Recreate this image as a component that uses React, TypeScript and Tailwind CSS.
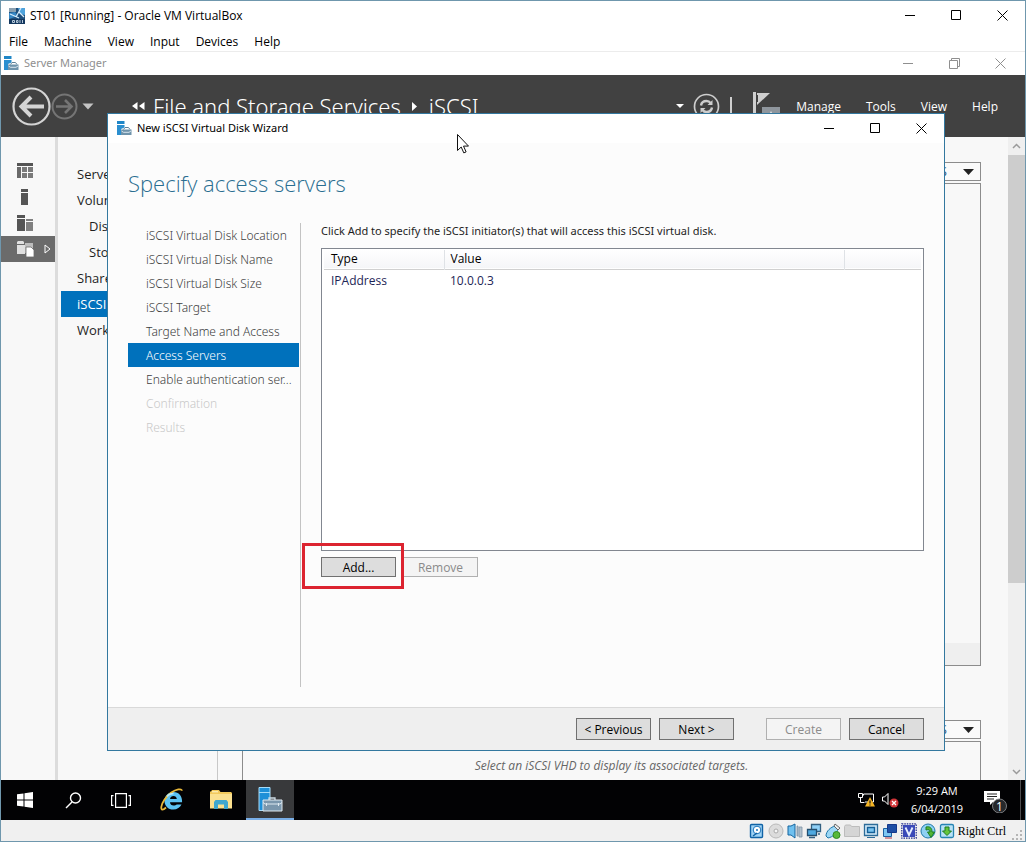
import { useState, type ReactNode } from "react";
import clsx from "clsx";

const STEPS = [
  { label: "iSCSI Virtual Disk Location" },
  { label: "iSCSI Virtual Disk Name" },
  { label: "iSCSI Virtual Disk Size" },
  { label: "iSCSI Target" },
  { label: "Target Name and Access" },
  { label: "Access Servers" },
  { label: "Enable authentication ser..." },
  { label: "Confirmation", disabled: true },
  { label: "Results", disabled: true },
];

const NAV = [
  { label: "Servers" },
  { label: "Volumes" },
  { label: "Disks", sub: true },
  { label: "Storage Pools", sub: true },
  { label: "Shares" },
  { label: "iSCSI" },
  { label: "Work Folders" },
];

const INITIATORS = [{ type: "IPAddress", value: "10.0.0.3" }];

/* ---------- window chrome ---------- */

function WindowControls({ restore, className }: { restore?: boolean; className?: string }) {
  const btn = "flex h-full w-[46px] items-center justify-center";
  return (
    <div className={clsx("flex h-full shrink-0", className)}>
      <button className={btn} aria-label="Minimize">
        <svg width="11" height="11" viewBox="0 0 11 11" stroke="currentColor" fill="none"><path d="M0 5.5h10" /></svg>
      </button>
      <button className={btn} aria-label={restore ? "Restore" : "Maximize"}>
        <svg width="11" height="11" viewBox="0 0 11 11" stroke="currentColor" fill="none">
          {restore ? <path d="M.5 2.5h8v8h-8zM2.5 2.500v-2h8v8h-2" /> : <path d="M.5.5h9v9h-9z" />}
        </svg>
      </button>
      <button className={btn} aria-label="Close">
        <svg width="11" height="11" viewBox="0 0 11 11" stroke="currentColor" fill="none"><path d="M.5.5l10 10M10.500.5l-10 10" /></svg>
      </button>
    </div>
  );
}

function ServerIcon({ size = 15 }: { size?: number }) {
  return (
    <svg width={size} height={size} viewBox="0 0 15 15" className="shrink-0">
      <path d="M0 0h7.500v3H0z" fill="#1f86c7" />
      <path d="M0 4h7.500v2.500L4 8v6H0z" fill="#2b8fd0" />
      <path d="M6.500 8.500l1.500-2h3.500l1.500 2" fill="none" stroke="#5f8096" />
      <path d="M4 8.500h10.500V14H4z" fill="#6f93ab" />
      <path d="M4.500 10l2 1.300h5.500l2-1.300" fill="none" stroke="#e4eef5" strokeWidth=".9" />
    </svg>
  );
}

function VmIcon() {
  return (
    <svg width="16" height="16" viewBox="0 0 16 16" className="shrink-0">
      <rect width="16" height="16" fill="#1d4e7c" />
      <path d="M0 0h7v4H0z" fill="#8ba0b0" />
      <path d="M9 0h7v7l-5-1z" fill="#4ea3dd" />
      <path d="M0 5l6-1 3 4-9 3z" fill="#3787c4" />
      <path d="M12 0L7 9M1 6l9 4M10 4l5 5" stroke="#d8ecfa" strokeWidth="1.200" />
      <path d="M0 11h16v5H0z" fill="#14385f" />
      <path d="M3.500 12.500h2v2h-2zM7.500 12.500h1.500v2H7.500zM11 12v3M13.500 12v3" fill="none" stroke="#c7d8e6" strokeWidth=".9" />
    </svg>
  );
}

/* ---------- server manager header ---------- */

function Header() {
  return (
    <header className="flex h-[62px] shrink-0 items-center bg-[#414141] text-white">
      <div className="flex h-full w-[131px] shrink-0 items-center pl-[11px]">
        <button aria-label="Back">
          <svg width="39" height="39" viewBox="0 0 39 39" fill="none">
            <circle cx="19.500" cy="19.500" r="18" stroke="#d4d4d4" strokeWidth="2.200" />
            <path d="M32 19.500H11M19 10l-9.500 9.500L19 29" stroke="#d4d4d4" strokeWidth="4" />
          </svg>
        </button>
        <button aria-label="Forward">
          <svg width="27" height="27" viewBox="0 0 27 27" fill="none">
            <circle cx="13.500" cy="13.500" r="12" stroke="#757575" strokeWidth="2" />
            <path d="M5 13.500h15M14 7l6.500 6.500L14 20" stroke="#757575" strokeWidth="2.600" />
          </svg>
        </button>
        <button aria-label="History" className="ml-1">
          <svg width="12" height="7" viewBox="0 0 12 7"><path d="M.5.5h11L6 6.500z" fill="#c4c4c4" /></svg>
        </button>
      </div>
      <nav className="flex min-w-0 flex-1 items-center font-['Noto_Sans',sans-serif] text-[22px] leading-8 font-light whitespace-nowrap">
        <svg width="13" height="8" viewBox="0 0 13 8" fill="#fff" className="mr-2 shrink-0"><path d="M5.500 0v8L0 4zM12.500 0v8L7 4z" /></svg>
        <a href="#storage">File and Storage Services</a>
        <svg width="6" height="9" viewBox="0 0 6 9" fill="#fff" className="mx-[11px] shrink-0"><path d="M0 0v9l5-4.500z" /></svg>
        <a href="#iscsi">iSCSI</a>
      </nav>
      <div className="flex shrink-0 items-center pr-[27px] text-[12px]">
        <svg width="8" height="5" viewBox="0 0 8 5" fill="#fff" className="mr-[9px]"><path d="M0 0h8L4 4z" /></svg>
        <button aria-label="Refresh">
          <svg width="27" height="27" viewBox="0 0 27 27" fill="none" stroke="#cdcdcd">
            <circle cx="13.500" cy="13.500" r="12" strokeWidth="1.700" />
            <path d="M8 12.500c.5-3 3-4.500 5.500-4.500 1.500 0 3 .5 4 2M19 14.500c-.5 3-3 4.500-5.500 4.500-1.500 0-3-.5-4-2" strokeWidth="2.400" />
            <path d="M19.500 7v5h-5zM7.500 20v-5h5z" fill="#cdcdcd" stroke="none" />
          </svg>
        </button>
        <span className="ml-[10px] h-[18px] w-[2px] bg-[#cfcfcf]" />
        <button aria-label="Notifications" className="ml-[21px]">
          <svg width="28" height="28" viewBox="0 0 28 28">
            <path d="M0 0h3v28H0z" fill="#cfcfcf" />
            <path d="M4 1h13L4 13z" fill="#cfcfcf" />
            <path d="M4.500 3v7" stroke="#414141" />
            <path d="M9 15h18v11H9z" fill="#8f969d" />
            <path d="M18 19l3 6h-6z" fill="#e9e9e9" />
          </svg>
        </button>
        <div className="ml-[15px] flex gap-[25px] pt-[2px]">
          <button>Manage</button>
          <button>Tools</button>
          <button>View</button>
          <button>Help</button>
        </div>
      </div>
    </header>
  );
}

/* ---------- left rail + role navigation ---------- */

function Rail() {
  const row = "flex h-[26px] w-full items-center pl-4";
  return (
    <div className="w-[54px] shrink-0 bg-[#f8f8f8] pt-[21px]">
      <button className={row} aria-label="Dashboard">
        <svg width="16" height="16" viewBox="0 0 16 16">
          <path d="M0 0h16v3H0z" fill="#555" />
          <path d="M0 4h4v11H0z" fill="#6a6a6a" />
          <path d="M5 4h5v5H5zM11 4h5v5h-5zM5 10h5v5H5zM11 10h5v5h-5z" fill="#7a7a7a" />
        </svg>
      </button>
      <button className={row} aria-label="Local Server">
        <svg width="16" height="16" viewBox="0 0 16 16"><path d="M4 0h7v3H4zM4 4h7v12H4z" fill="#555" /></svg>
      </button>
      <button className={row} aria-label="All Servers">
        <svg width="16" height="16" viewBox="0 0 16 16">
          <path d="M0 0h8v3H0zM0 4h8v12H0z" fill="#555" />
          <path d="M9 4h7v2H9zM9 7h7v9H9z" fill="#808080" />
        </svg>
      </button>
      <button className={clsx(row, "bg-[#6b6b6b]")} aria-label="File and Storage Services">
        <svg width="17" height="16" viewBox="0 0 17 16">
          <path d="M0 1l1-1h5l1 1v2H0zM0 4h8v9H0z" fill="#e0e0e0" />
          <path d="M8 2h8v3H8zM8 5h8v7H8z" fill="#bdbdbd" />
          <path d="M9 6h5l3 3v7H9z" fill="#fff" stroke="#6b6b6b" strokeWidth=".8" />
        </svg>
        <svg width="7" height="10" viewBox="0 0 7 10" className="ml-[10px]"><path d="M1 1v8l5-4z" fill="none" stroke="#fff" /></svg>
      </button>
    </div>
  );
}

function RoleNav() {
  return (
    <nav className="w-[160px] shrink-0 border-r border-[#c8c8c8] bg-[#f8f8f8] pt-6 pl-[3px] text-[13px]">
      {NAV.map((item) => (
        <a
          key={item.label}
          href={`#${item.label}`}
          className={clsx(
            "flex h-[26px] items-center pt-[2px] whitespace-nowrap",
            item.sub ? "pl-7" : "pl-4",
            item.label === "iSCSI" ? "bg-[#0071bc] text-white" : "text-[#1e1e1e]"
          )}
        >
          {item.label}
        </a>
      ))}
    </nav>
  );
}

function TasksSelect({ label }: { label: string }) {
  return (
    <div className="relative h-[19px] w-20 self-end">
      <select
        aria-label={label}
        className="h-full w-full appearance-none border border-[#8c8c8c] bg-[#fafafa] pl-[10px] text-[12px] leading-4 text-[#1f4e79]"
      >
        <option>TASKS</option>
      </select>
      <svg width="11" height="6" viewBox="0 0 11 6" className="pointer-events-none absolute top-[7px] right-[7px]">
        <path d="M0 0h11L5.500 6z" fill="#222" />
      </svg>
    </div>
  );
}

function Scrollbar() {
  return (
    <div className="flex w-[17px] shrink-0 flex-col bg-[#efefef] text-[#9a9a9a]">
      <button aria-label="Scroll up" className="flex h-[18px] items-center justify-center">
        <svg width="9" height="6" viewBox="0 0 9 6" fill="none" stroke="currentColor" strokeWidth="1.500"><path d="M1 5l3.500-3.500L8 5" /></svg>
      </button>
      <div className="flex-[428_1_0%] bg-[#cdcdcd]" />
      <div className="flex-[180_1_0%]" />
      <button aria-label="Scroll down" className="flex h-[17px] items-center justify-center">
        <svg width="9" height="6" viewBox="0 0 9 6" fill="none" stroke="currentColor" strokeWidth="1.500"><path d="M1 1l3.500 3.500L8 1" /></svg>
      </button>
    </div>
  );
}

/* ---------- wizard ---------- */

function DialogButton({ children, disabled, className, onClick }: { children: ReactNode; disabled?: boolean; className?: string; onClick?: () => void }) {
  return (
    <button
      disabled={disabled}
      onClick={onClick}
      className={clsx(
        "w-[75px] border pt-[2px] text-[12px] leading-4",
        disabled ? "border-[#b0b0b0] bg-[#f4f4f4] text-[#8b8b8b]" : "border-[#707070] bg-[#dddddd] text-black",
        className
      )}
    >
      {children}
    </button>
  );
}

function Wizard() {
  const [step, setStep] = useState(5);

  return (
    <section
      role="dialog"
      aria-label="New iSCSI Virtual Disk Wizard"
      className="absolute top-[61px] right-20 bottom-[69px] left-[106px] flex flex-col border border-[#33789f] bg-[#fcfcfc]"
    >
      <div className="flex h-[29px] shrink-0 items-center bg-white pl-[9px]">
        <ServerIcon />
        <span className="ml-[5px] flex-1 font-['Noto_Sans',sans-serif] text-[11px] text-black">New iSCSI Virtual Disk Wizard</span>
        <WindowControls />
      </div>

      <h1 className="mt-6 mb-6 pl-5 text-[22px] leading-8 font-light text-[#2a6e91]">Specify access servers</h1>

      <div className="flex min-h-0 flex-1 pr-5 pb-5 pl-5">
        <ol className="w-[173px] shrink-0 border-r border-[#c3c3c3] pr-px">
          {STEPS.map((s, i) => (
            <li key={s.label}>
              <button
                disabled={s.disabled}
                onClick={() => setStep(i)}
                aria-current={i === step ? "step" : undefined}
                className={clsx(
                  "block h-6 w-full pt-[2px] pl-[18px] text-left font-['Noto_Sans',sans-serif] text-[12px] font-light whitespace-nowrap",
                  i === step ? "bg-[#0071bc] text-white" : s.disabled ? "text-[#c8c8c8]" : "text-[#3c3c3c]"
                )}
              >
                {s.label}
              </button>
            </li>
          ))}
        </ol>

        <div className="flex min-w-0 flex-1 flex-col pl-5">
          <p className="font-['Noto_Sans',sans-serif] text-[11px] leading-4 whitespace-nowrap text-[#1e1e1e]">
            Click Add to specify the iSCSI initiator(s) that will access this iSCSI virtual disk.
          </p>
          <div className="mt-[9px] h-[303px] border border-[#828790] bg-white px-[2px] pt-px">
            <table className="w-full table-fixed border-collapse text-left text-[12px] leading-4">
              <colgroup>
                <col className="w-[120px]" />
                <col className="w-[400px]" />
                <col />
              </colgroup>
              <thead>
                <tr className="h-[19px] border-b border-[#d0d0d0] bg-linear-to-b from-white to-[#f5f6f8]">
                  <th className="border-r border-[#dfe2e6] pl-[7px] font-normal">Type</th>
                  <th className="border-r border-[#dfe2e6] pl-[6px] font-normal">Value</th>
                  <th />
                </tr>
              </thead>
              <tbody>
                {INITIATORS.map((row) => (
                  <tr key={row.value} className="h-6 text-[#1d2556]">
                    <td className="pl-[7px]">{row.type}</td>
                    <td className="pl-[6px]">{row.value}</td>
                    <td />
                  </tr>
                ))}
              </tbody>
            </table>
          </div>
          <div className="mt-[6px] flex gap-[7px]">
            <div className="relative flex">
              <DialogButton className="h-5">Add...</DialogButton>
              {/* highlight frame */}
              <div className="pointer-events-none absolute -top-[14px] -right-2 -bottom-3 -left-[19px] border-3 border-[#dc2430]" />
            </div>
            <DialogButton className="h-5" disabled>Remove</DialogButton>
          </div>
        </div>
      </div>

      <div className="flex h-[43px] shrink-0 items-center justify-end border-t border-[#d9d9d9] bg-[#efefef] pr-5">
        <DialogButton className="h-[22px]" onClick={() => setStep((s) => Math.max(0, s - 1))}>&lt; Previous</DialogButton>
        <DialogButton className="ml-2 h-[22px]" onClick={() => setStep((s) => Math.min(6, s + 1))}>Next &gt;</DialogButton>
        <DialogButton className="ml-8 h-[22px]" disabled>Create</DialogButton>
        <DialogButton className="ml-2 h-[22px]">Cancel</DialogButton>
      </div>
    </section>
  );
}

/* ---------- guest taskbar ---------- */

function Taskbar() {
  const cell = "flex h-full w-12 items-center justify-center";
  return (
    <div className="flex h-10 shrink-0 items-center bg-[#020204] text-white">
      <button className={cell} aria-label="Start">
        <svg width="16" height="16" viewBox="0 0 16 16" fill="#fff"><path d="M0 2.300L6.500 1.400V7.500H0zM7.500 1.200L16 0v7.500H7.500zM0 8.500h6.500v6.100L0 13.700zM7.500 8.500H16V16l-8.500-1.200z" /></svg>
      </button>
      <button className={cell} aria-label="Search">
        <svg width="17" height="17" viewBox="0 0 17 17" fill="none" stroke="#fff" strokeWidth="1.400"><circle cx="10.500" cy="6" r="5" /><path d="M7 10L1 16" /></svg>
      </button>
      <button className={cell} aria-label="Task View">
        <svg width="20" height="15" viewBox="0 0 20 15" fill="none" stroke="#fff" strokeWidth="1.200"><path d="M4.600.6h10.800v13.800H4.600zM2.500 2.600H.6v9.800h1.900M17.500 2.600h1.900v9.800h-1.900" /></svg>
      </button>
      <button className={clsx(cell, "ml-[3px]")} aria-label="Internet Explorer">
        <svg width="24" height="24" viewBox="0 0 24 24" fill="none">
          <path d="M21.500 16.500c-1.400 2.900-4.300 5-8.200 5-5.200 0-8.800-3.800-8.800-8.600 0-4.900 3.700-9 8.900-9 5.400 0 9 4 8.700 10.300H10c.2 2.100 1.600 3.300 3.500 3.300 1.400 0 2.500-.3 3.100-1z" fill="#5cc3f2" />
          <path d="M10 10.900h6.800c-.2-1.900-1.500-3-3.300-3s-3.200 1.100-3.500 3z" fill="#020204" />
          <path d="M6 19.500C3 22.500 1 22.500 1.300 19c.4-4 4.500-10.500 10-14.400C16 1.200 21.800.2 21.900 2.800" stroke="#e9b93a" strokeWidth="1.800" />
          <path d="M7 8.500c1.500-2 4-3 6.500-3" stroke="#b8e8fb" strokeWidth="1.400" />
        </svg>
      </button>
      <button className={clsx(cell, "ml-px")} aria-label="File Explorer">
        <svg width="22" height="20" viewBox="0 0 22 20">
          <path d="M0 1.500h1L2 0h7l1.500 2H21l1 1v15H0z" fill="#f2c95c" />
          <path d="M0 4h22v14.500H0z" fill="#fbe08f" />
          <path d="M4 19v-7l1.500-2h11l1.500 2v7h-4v-4.500H8V19z" fill="#3fa7cf" />
          <path d="M2 1.800h6" stroke="#fff5cc" />
        </svg>
      </button>
      <button className={clsx(cell, "ml-px border-b-2 border-[#79aee6] bg-[#38393b]")} aria-label="Server Manager">
        <svg width="25" height="25" viewBox="0 0 25 25">
          <path d="M1 .5h11v23H1z" fill="#1e90d8" stroke="#a5dcfa" />
          <path d="M1 5.500h11" stroke="#a5dcfa" />
          <path d="M11 13v-2h6v2" fill="none" stroke="#cddbe5" strokeWidth="1.300" />
          <path d="M5 13h19v11H5z" fill="#7b97ad" stroke="#dfe9f0" />
          <path d="M5 15.500l2 1.500h15l2-1.500M8.500 16v3M20.500 16v3" fill="none" stroke="#dfe9f0" />
        </svg>
      </button>

      <div className="ml-auto flex h-full items-center">
        <svg width="17" height="16" viewBox="0 0 17 16" fill="none" aria-label="Network">
          <path d="M5.500 3.500V2h10v8H7M.5 1.500h4v4h-4zM2.500 5.500v5h4" stroke="#fff" />
          <path d="M12 5l5 9.500H7z" fill="#f6b624" />
          <path d="M12 8.500v3M12 12.500v1" stroke="#222" strokeWidth="1.300" />
        </svg>
        <svg width="17" height="16" viewBox="0 0 17 16" fill="none" className="ml-[7px]" aria-label="Volume">
          <path d="M.5 5h2L6 1.500v11L2.500 9h-2z" stroke="#fff" />
          <circle cx="12" cy="11" r="4.500" fill="#d03438" />
          <path d="M10 9l4 4M14 9l-4 4" stroke="#fff" strokeWidth="1.300" />
        </svg>
        <div className="ml-[10px] w-14 text-center text-[11px] leading-[18px] whitespace-nowrap">
          <div>9:29 AM</div>
          <div>6/04/2019</div>
        </div>
        <button className="ml-[19px]" aria-label="Notifications">
          <svg width="26" height="26" viewBox="0 0 26 26">
            <path d="M0 4h16v11H9l-3 3v-3H0z" fill="#fff" />
            <path d="M3 7h10M3 9.500h10M3 12h7" stroke="#222" />
            <circle cx="15.500" cy="19" r="7" fill="#26282b" stroke="#7b7d80" />
            <text x="15.500" y="23.500" textAnchor="middle" fontSize="12" fontFamily="Open Sans" fill="#fff">1</text>
          </svg>
        </button>
        <span className="mr-1 ml-[10px] h-full w-px bg-[#4c4c4e]" />
      </div>
    </div>
  );
}

/* ---------- VirtualBox status bar ---------- */

function StatusBar() {
  return (
    <footer className="flex h-[21px] shrink-0 items-center justify-end bg-[#f0f0f0] pr-[2px]">
      <div className="flex gap-[3px]">
        {/* hard disk */}
        <svg width="16" height="16" viewBox="0 0 16 16"><rect x="1.500" y="1.500" width="12" height="13" rx="1" fill="#9fd3f5" stroke="#0f62a5" strokeWidth="1.400" /><circle cx="8" cy="7" r="3.800" fill="#fff" stroke="#1b74bb" /><circle cx="8" cy="7" r="1" fill="#1b74bb" /><path d="M4 13l4-3" stroke="#0f62a5" strokeWidth="1.500" /></svg>
        {/* optical */}
        <svg width="16" height="16" viewBox="0 0 16 16"><circle cx="8" cy="8" r="7" fill="#dcdcdc" stroke="#b9b9b9" /><circle cx="8" cy="8" r="2" fill="#f5f5f5" stroke="#aaa" /></svg>
        {/* audio */}
        <svg width="16" height="16" viewBox="0 0 16 16"><path d="M1 3h3l4-2v14l-4-3H1z" fill="#6fc0ef" stroke="#15659f" /><path d="M10 3h1v10h-1zM12 4h3v10h-3z" fill="#b3c2cd" stroke="#7d93a4" strokeWidth=".8" /></svg>
        {/* network */}
        <svg width="16" height="16" viewBox="0 0 16 16"><path d="M5.500 1.500h9v7h-9z" fill="#8fd0f7" stroke="#335f80" strokeWidth="1.300" /><path d="M1.500 6.500h9v6h-9z" fill="#4fa9e0" stroke="#234f70" strokeWidth="1.300" /><path d="M3 14.500h6M12 11h2" stroke="#335f80" strokeWidth="1.300" /></svg>
        {/* usb */}
        <svg width="16" height="16" viewBox="0 0 16 16"><path d="M1 13C1 8 6 4 10 3l3 3c-1 4-5 8-10 9z" fill="#9bd7f5" stroke="#1b74a8" /><path d="M10 1l5 4-2 2-4-4z" fill="#eee" stroke="#666" /><circle cx="11.500" cy="12" r="3.500" fill="#57b83a" stroke="#2f8a22" /></svg>
        {/* shared folder */}
        <svg width="16" height="16" viewBox="0 0 16 16"><path d="M.5 3.500l1-1.500h5l1 1.500h8v10H.5z" fill="#d5d5d5" stroke="#bcbcbc" /></svg>
        {/* display */}
        <svg width="16" height="16" viewBox="0 0 16 16"><path d="M1.500 1.500h13v11h-13z" fill="#d6ecfa" stroke="#2d6c99" strokeWidth="1.300" /><path d="M4.500 4.500h7v5h-7z" fill="#7ac4f0" stroke="#155f97" strokeWidth="1.400" /><path d="M4 14.500h8" stroke="#2d6c99" /></svg>
        {/* recording */}
        <svg width="16" height="16" viewBox="0 0 16 16"><path d="M1.500 5.500h8v8h-8z" fill="#7cc6f3" stroke="#1b5fa0" /><path d="M5.500 1.500h9v8h-9z" fill="#1f4fa5" stroke="#16398a" /><path d="M3 15h7" stroke="#b03040" /></svg>
        {/* cpu */}
        <svg width="16" height="16" viewBox="0 0 16 16"><rect x=".8" y=".8" width="14.400" height="14.400" fill="none" stroke="#232b8a" strokeWidth="1.200" strokeDasharray="1.500 1" /><rect x="2" y="2" width="12" height="12" fill="#3a49b8" /><path d="M4.500 4.500L8 12l3.500-7.500" fill="none" stroke="#e8efff" strokeWidth="1.800" /></svg>
        {/* mouse */}
        <svg width="16" height="16" viewBox="0 0 16 16"><circle cx="8" cy="8" r="7" fill="#8ed0f3" stroke="#1f78a8" /><path d="M6 4c4-1 6 1 6 5h2.500L11 14.500 7.500 9H10c0-2-1-3-4-2z" fill="#53b535" stroke="#1d7d22" /></svg>
        {/* keyboard */}
        <svg width="16" height="16" viewBox="0 0 16 16"><rect x="1.500" y="1.500" width="13" height="13" rx="1.500" fill="#b9e2f6" stroke="#2684b3" strokeWidth="1.300" /><path d="M6 4h4v4h2.500L8 12.500 3.500 8H6z" fill="#64c43c" stroke="#1d7d22" /></svg>
      </div>
      <span className="ml-[3px] font-['Liberation_Serif',serif] text-[12px] text-black">Right Ctrl</span>
      <svg width="11" height="11" viewBox="0 0 11 11" className="ml-[6px] self-end" fill="#b5b5b5"><path d="M8 0h2v2H8zM4 4h2v2H4zM8 4h2v2H8zM0 8h2v2H0zM4 8h2v2H4zM8 8h2v2H8z" /></svg>
    </footer>
  );
}

export default function App() {
  return (
    <div className="flex min-h-screen flex-col border border-[#6f97ad] bg-white font-['Open_Sans','Noto_Sans',sans-serif] text-[12px] text-black">
      <div className="flex h-[29px] shrink-0 items-center pl-2">
        <VmIcon />
        <span className="ml-[5px] flex-1 text-[12px]">ST01 [Running] - Oracle VM VirtualBox</span>
        <WindowControls />
      </div>
      <div className="flex h-[21px] shrink-0 items-center gap-4 pt-[2px] pl-2 text-[12px]">
        {["File", "Machine", "View", "Input", "Devices", "Help"].map((m) => (
          <button key={m}>{m}</button>
        ))}
      </div>

      {/* guest desktop */}
      <div className="relative flex flex-1 flex-col border-t border-[#ececec]">
        <div className="flex h-[23px] shrink-0 items-center pl-[3px] text-[#8f8f8f]">
          <ServerIcon />
          <span className="ml-[5px] flex-1 font-['Noto_Sans',sans-serif] text-[11px]">Server Manager</span>
          <WindowControls restore className="mr-[2px]" />
        </div>
        <Header />

        <main className="flex min-h-0 flex-1 bg-[#f8f8f8]">
          <Rail />
          <div className="w-[3px] shrink-0 bg-[#dcdcdc]" />
          <RoleNav />
          <div className="flex min-w-0 flex-1 flex-col pt-[25px] pr-[27px] pl-6">
            <TasksSelect label="Virtual disk tasks" />
            <div className="mt-[2px] flex flex-1 flex-col justify-end border border-[#8c8c8c]">
              <div className="h-[22px] bg-[#efefef]" />
            </div>
            <div className="mt-[54px] flex flex-col">
              <TasksSelect label="Target tasks" />
            </div>
            <div className="mt-[2px] flex h-[39px] items-end justify-center border border-b-0 border-[#8c8c8c] pb-1">
              <p className="text-[12px] leading-5 whitespace-nowrap text-[#666] italic">Select an iSCSI VHD to display its associated targets.</p>
            </div>
          </div>
          <Scrollbar />
        </main>

        <Taskbar />
        <Wizard />

        <svg width="12" height="20" viewBox="0 0 12 20" className="pointer-events-none absolute top-[82px] left-[456px]">
          <path d="M.5.5v16l3.700-3.500 2.600 5.900 2.300-1-2.600-5.800h5z" fill="#fff" stroke="#111" />
        </svg>
      </div>
      <StatusBar />
    </div>
  );
}
